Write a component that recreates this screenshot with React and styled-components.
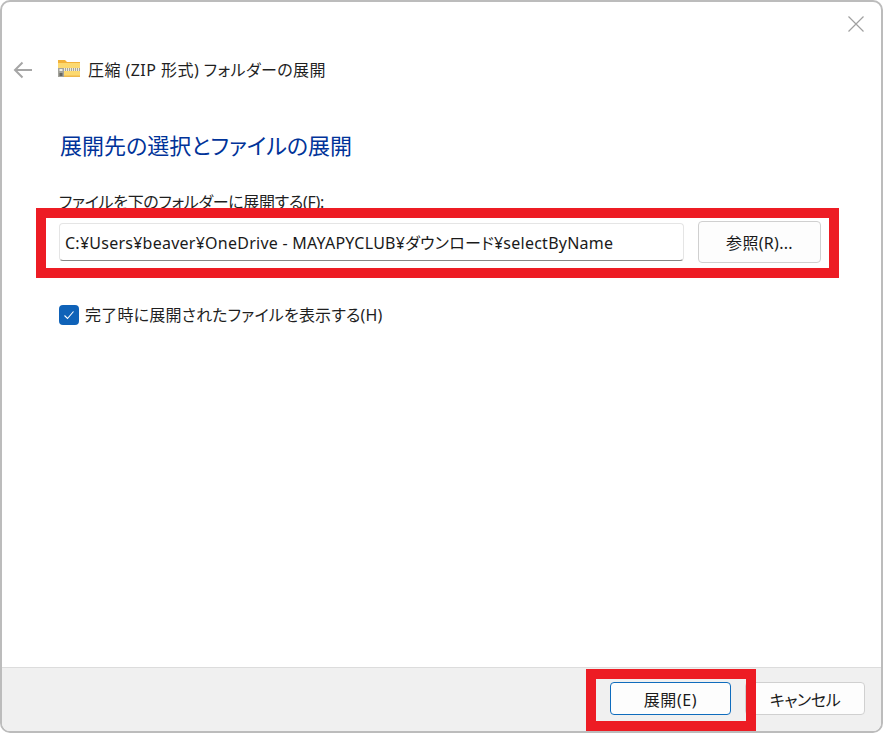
import React from 'react';
import styled, { createGlobalStyle } from 'styled-components';

const GlobalStyle = createGlobalStyle`
  html, body {
    margin: 0;
    padding: 0;
    background: #ffffff;
  }
  * {
    box-sizing: border-box;
  }
`;

const FONT = `"Noto Sans", "Noto Sans CJK JP", sans-serif`;

const Window = styled.div`
  position: relative;
  width: 883px;
  height: 733px;
  display: flex;
  flex-direction: column;
  border: 2px solid #bcbcbc;
  border-radius: 10px;
  overflow: hidden;
  background: #ffffff;
  color: #1a1a1a;
  font-family: ${FONT};
  font-size: 16px;
  font-feature-settings: "palt";
`;

const TitleStrip = styled.div`
  height: 38px;
  display: flex;
  justify-content: flex-end;
  align-items: flex-start;
  padding: 14px 17px 0 0;
`;

const CloseIcon = styled.svg`
  width: 16px;
  height: 16px;
  stroke: #a0a0a0;
  stroke-width: 1.2;
  fill: none;
`;

const NavRow = styled.div`
  height: 60px;
  display: flex;
  align-items: center;
  padding-left: 11px;
`;

const BackIcon = styled.svg`
  width: 20px;
  height: 18px;
  stroke: #a6a6a6;
  stroke-width: 2;
  fill: none;
  margin-right: 25px;
`;

const ZipIcon = styled.svg`
  width: 24px;
  height: 20px;
  margin-right: 6px;
`;

const WindowTitle = styled.span`
  font-size: 16px;
  line-height: 22px;
  letter-spacing: 0.45px;
  color: #1f1f1f;
`;

const Content = styled.div`
  flex: 1;
  display: flex;
  flex-direction: column;
  padding: 0 60px 0 57px;
`;

const Heading = styled.h1`
  margin: 29px 0 0 1px;
  font-size: 22px;
  line-height: 32px;
  font-weight: 400;
  color: #003399;
`;

const FieldLabel = styled.div`
  margin-top: 30px;
  font-size: 16px;
  line-height: 22px;
  letter-spacing: -0.3px;
  color: #1f1f1f;
`;

const PathRow = styled.div`
  margin-top: 8px;
  display: flex;
  align-items: center;
  gap: 14px;
  height: 42px;
`;

const PathInput = styled.div`
  width: 625px;
  height: 38px;
  display: flex;
  align-items: center;
  padding-left: 5px;
  background: #ffffff;
  border: 1px solid #e5e5e5;
  border-bottom: 1px solid #868686;
  border-radius: 4px;
  font-size: 16px;
  letter-spacing: 0.25px;
  white-space: nowrap;
  color: #1a1a1a;
`;

const Button = styled.button`
  width: ${p => p.$width}px;
  height: ${p => p.$height}px;
  padding: 0;
  background: #fdfdfd;
  border: 1px solid ${p => (p.$primary ? '#0f6cbd' : '#d0d0d0')};
  border-radius: 4px;
  font-family: ${FONT};
  font-feature-settings: "palt";
  font-size: 16px;
  letter-spacing: ${p => p.$spacing}px;
  color: #1a1a1a;
`;

const CheckRow = styled.div`
  margin-top: 41px;
  display: flex;
  align-items: center;
  gap: 6px;
  height: 22px;
`;

const CheckBox = styled.span`
  width: 20px;
  height: 20px;
  display: flex;
  align-items: center;
  justify-content: center;
  background: #0f62b8;
  border-radius: 4px;
`;

const CheckIcon = styled.svg`
  width: 12px;
  height: 12px;
  stroke: #ffffff;
  stroke-width: 1.1;
  fill: none;
`;

const CheckLabel = styled.span`
  font-size: 16px;
  line-height: 22px;
  letter-spacing: 0.2px;
  color: #1f1f1f;
`;

const Footer = styled.div`
  height: 64px;
  display: flex;
  justify-content: flex-end;
  align-items: flex-start;
  gap: 14px;
  padding: 14px 16px 0 0;
  background: #f0f0f0;
  border-top: 1px solid #dcdcdc;
`;

// red annotation boxes drawn over the dialog
const Highlight = styled.div`
  position: absolute;
  left: ${p => p.$left}px;
  top: ${p => p.$top}px;
  width: ${p => p.$width}px;
  height: ${p => p.$height}px;
  border: 10px solid #ed1c24;
  pointer-events: none;
`;

const App = () => (
  <>
    <GlobalStyle />
    <Window>
      <TitleStrip>
        <CloseIcon viewBox="0 0 16 16">
          <path d="M0.5 0.5 L15.5 15.5 M15.5 0.5 L0.5 15.5" />
        </CloseIcon>
      </TitleStrip>
      <NavRow>
        <BackIcon viewBox="0 0 20 18">
          <path d="M19 9 H2 M9.5 1.5 L2 9 L9.5 16.5" />
        </BackIcon>
        <ZipIcon viewBox="0 0 24 20">
          <path d="M0 0 H7 L9 2 H22 V5 H0 Z" fill="#f2b23a" />
          <rect x="0" y="3" width="22" height="14" fill="#fcd970" />
          <rect x="0" y="15.5" width="22" height="1.5" fill="#eeb84a" />
          <rect x="5" y="8" width="17" height="3" fill="#aaa596" />
          <path d="M6.5 8 V11 M8.5 8 V11 M10.5 8 V11 M12.5 8 V11 M14.5 8 V11 M16.5 8 V11 M18.5 8 V11 M20.5 8 V11" stroke="#f4f2e6" strokeWidth="0.9" />
          <rect x="0" y="8" width="6" height="9" fill="#a3a39c" />
          <rect x="1.5" y="9" width="3" height="2" fill="#f0f0ea" />
          <rect x="1.5" y="13" width="3" height="3" fill="#66665f" />
        </ZipIcon>
        <WindowTitle>圧縮 (ZIP 形式) フォルダーの展開</WindowTitle>
      </NavRow>
      <Content>
        <Heading>展開先の選択とファイルの展開</Heading>
        <FieldLabel>ファイルを下のフォルダーに展開する(F):</FieldLabel>
        <PathRow>
          <PathInput>C:¥Users¥beaver¥OneDrive - MAYAPYCLUB¥ダウンロード¥selectByName</PathInput>
          <Button $width={123} $height={42} $spacing={0.3}>参照(R)...</Button>
        </PathRow>
        <CheckRow>
          <CheckBox>
            <CheckIcon viewBox="0 0 12 12">
              <path d="M1.5 6.5 L4.5 9.5 L10.5 2.5" />
            </CheckIcon>
          </CheckBox>
          <CheckLabel>完了時に展開されたファイルを表示する(H)</CheckLabel>
        </CheckRow>
      </Content>
      <Footer>
        <Button $width={121} $height={33} $spacing={0.6} $primary>展開(E)</Button>
        <Button $width={120} $height={33} $spacing={-0.4}>キャンセル</Button>
      </Footer>
      <Highlight $left={34} $top={206} $width={803} $height={70} />
      <Highlight $left={584} $top={667} $width={170} $height={62} />
    </Window>
  </>
);

export default App;
